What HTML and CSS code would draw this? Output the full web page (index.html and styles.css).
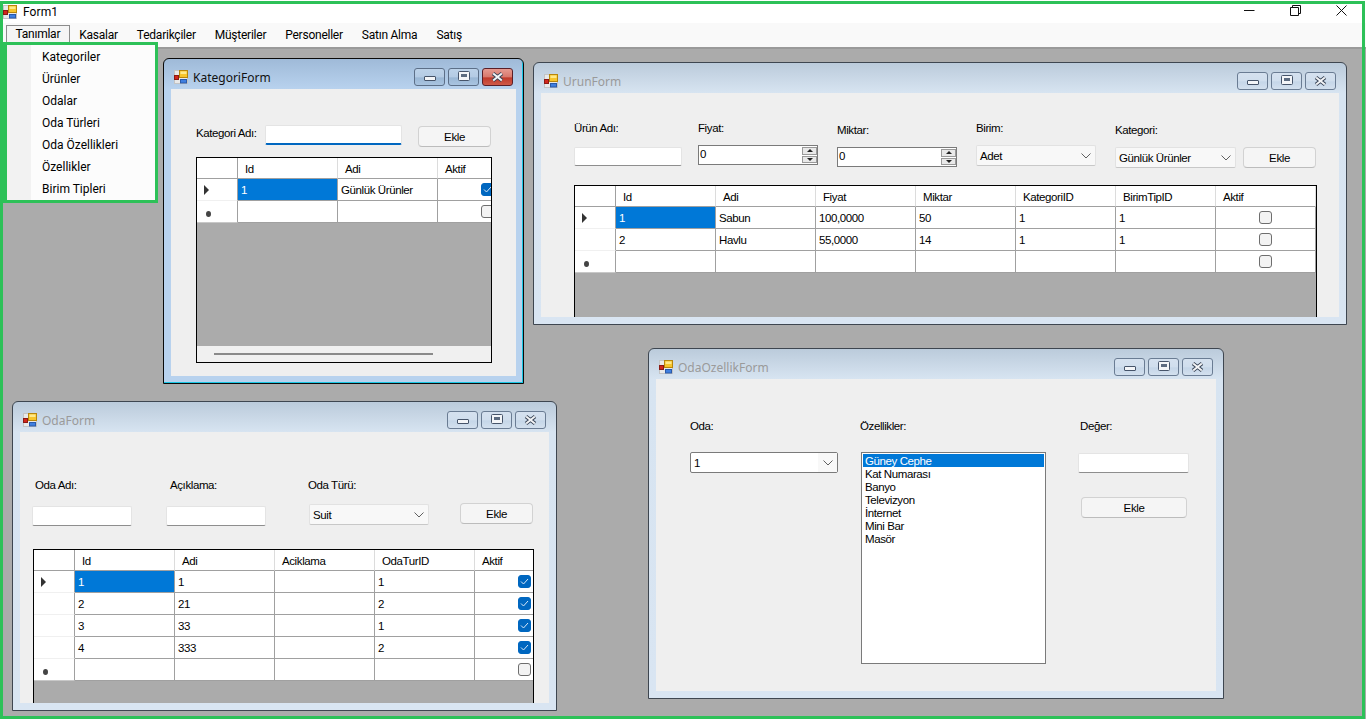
FILE: index.html
```html
<!DOCTYPE html>
<html lang="tr">
<head>
<meta charset="utf-8">
<title>Form1</title>
<link rel="stylesheet" href="styles.css">
</head>
<body>
<svg class="defs" width="0" height="0" aria-hidden="true">
  <symbol id="app" viewBox="0 0 14 14">
    <rect x="0.5" y="0.5" width="13" height="13" fill="#e9e9e9" stroke="#c4c4c4"/>
    <rect x="5.5" y="0.5" width="8" height="7" fill="#f7c52c" stroke="#b8860b" stroke-width="1"/>
    <rect x="6.5" y="1.5" width="6" height="2.5" fill="#ffe98a"/>
    <rect x="0.5" y="5.5" width="4" height="4" fill="#d2261c" stroke="#8a1a14" stroke-width="1"/>
    <rect x="6.5" y="9.5" width="6" height="3.5" fill="#3f7fe0" stroke="#2a5aa8" stroke-width="1"/>
  </symbol>
  <symbol id="min" viewBox="0 0 12 6"><rect x="0.5" y="0.5" width="11" height="4" rx="0.5" fill="#f3f5f8" stroke="#46546a"/></symbol>
  <symbol id="max" viewBox="0 0 12 10"><rect x="0.5" y="0.5" width="11" height="9" rx="1" fill="#f3f5f8" stroke="#46546a"/><rect x="3" y="3" width="6" height="3" fill="#5c6b80"/></symbol>
  <symbol id="close" viewBox="0 0 13 10"><path d="M2 1.5 L6.5 5 L11 1.5 M2 8.5 L6.5 5 L11 8.5" fill="none" stroke="#3a4658" stroke-width="3.8"/><path d="M2.2 1.6 L6.5 5 L10.8 1.6 M2.2 8.4 L6.5 5 L10.8 8.4" fill="none" stroke="#f5f6f8" stroke-width="1.9"/></symbol>
  <symbol id="chev" viewBox="0 0 10 6"><path d="M0.5 0.5 L5 5 L9.5 0.5" fill="none" stroke="#606060" stroke-width="1"/></symbol>
  <symbol id="tick" viewBox="0 0 9 7"><path d="M1 3.5 L3.5 6 L8 1" fill="none" stroke="#d8e8f8" stroke-width="1"/></symbol>
</svg>

<div class="app">
  <header class="titlebar">
    <svg class="app-icon"><use href="#app"/></svg>
    <span class="app-title">Form1</span>
    <div class="sys-buttons">
      <span class="sys"><svg width="11" height="11" viewBox="0 0 11 11"><path d="M0 5.5 H10.5" stroke="#111" stroke-width="1"/></svg></span>
      <span class="sys"><svg width="11" height="11" viewBox="0 0 11 11"><path d="M0.5 2.5 H8.5 V10.5 H0.5 Z M2.5 2.5 V0.5 H10.5 V8.5 H8.5" fill="none" stroke="#111" stroke-width="1"/></svg></span>
      <span class="sys"><svg width="11" height="11" viewBox="0 0 11 11"><path d="M0.5 0.5 L10.5 10.5 M10.5 0.5 L0.5 10.5" stroke="#111" stroke-width="1"/></svg></span>
    </div>
  </header>

  <nav class="menubar">
    <span class="menu-item open">Tanımlar</span>
    <span class="menu-item">Kasalar</span>
    <span class="menu-item">Tedarikçiler</span>
    <span class="menu-item">Müşteriler</span>
    <span class="menu-item">Personeller</span>
    <span class="menu-item">Satın Alma</span>
    <span class="menu-item">Satış</span>
  </nav>

  <main class="mdi"></main>

  <!-- KategoriForm -->
  <section class="win active win-kategori">
    <div class="win-title">
      <svg class="win-icon"><use href="#app"/></svg>
      <span class="win-name">KategoriForm</span>
      <div class="win-buttons">
        <span class="wb"><svg class="g-min"><use href="#min"/></svg></span>
        <span class="wb"><svg class="g-max"><use href="#max"/></svg></span>
        <span class="wb wb-close"><svg class="g-close"><use href="#close"/></svg></span>
      </div>
    </div>
    <div class="client kategori-client">
      <div class="kategori-row">
        <label class="lbl kategori-label">Kategori Adı:</label>
        <span class="textbox focus kategori-text"></span>
        <span class="btn kategori-btn">Ekle</span>
      </div>
      <div class="dgv dgv-kategori">
        <div class="cells cols-3">
          <span class="h rh-h"></span><span class="h">Id</span><span class="h">Adi</span><span class="h">Aktif</span>
          <span class="rh"><i class="arrow"></i></span><span class="c sel">1</span><span class="c">Günlük Ürünler</span><span class="c ck"><span class="check on"><svg><use href="#tick"/></svg></span></span>
          <span class="rh new"><i class="star"></i></span><span class="c"></span><span class="c"></span><span class="c ck"><span class="check"></span></span>
        </div>
        <div class="hscroll"><span class="hthumb"></span></div>
      </div>
    </div>
  </section>

  <!-- UrunForm -->
  <section class="win win-urun">
    <div class="win-title">
      <svg class="win-icon"><use href="#app"/></svg>
      <span class="win-name">UrunForm</span>
      <div class="win-buttons">
        <span class="wb"><svg class="g-min"><use href="#min"/></svg></span>
        <span class="wb"><svg class="g-max"><use href="#max"/></svg></span>
        <span class="wb"><svg class="g-close"><use href="#close"/></svg></span>
      </div>
    </div>
    <div class="client urun-client">
      <div class="urun-row">
        <div class="field gap-12"><label class="lbl">Ürün Adı:</label><span class="textbox w-108"></span></div>
        <div class="field"><label class="lbl">Fiyat:</label><span class="numeric"><span class="num-val">0</span><span class="spin"><i class="up"></i><i class="down"></i></span></span></div>
        <div class="field low"><label class="lbl">Miktar:</label><span class="numeric"><span class="num-val">0</span><span class="spin"><i class="up"></i><i class="down"></i></span></span></div>
        <div class="field"><label class="lbl">Birim:</label><span class="combo">Adet<svg class="chev"><use href="#chev"/></svg></span></div>
        <div class="field low"><label class="lbl">Kategori:</label><span class="combo combo-wide">Günlük Ürünler<svg class="chev"><use href="#chev"/></svg></span></div>
        <span class="btn urun-btn">Ekle</span>
      </div>
      <div class="dgv dgv-urun">
        <div class="cells cols-7">
          <span class="h rh-h"></span><span class="h">Id</span><span class="h">Adi</span><span class="h">Fiyat</span><span class="h">Miktar</span><span class="h">KategoriID</span><span class="h">BirimTipID</span><span class="h">Aktif</span>
          <span class="rh"><i class="arrow"></i></span><span class="c sel">1</span><span class="c">Sabun</span><span class="c">100,0000</span><span class="c">50</span><span class="c">1</span><span class="c">1</span><span class="c ck"><span class="check"></span></span>
          <span class="rh"></span><span class="c">2</span><span class="c">Havlu</span><span class="c">55,0000</span><span class="c">14</span><span class="c">1</span><span class="c">1</span><span class="c ck"><span class="check"></span></span>
          <span class="rh new"><i class="star"></i></span><span class="c"></span><span class="c"></span><span class="c"></span><span class="c"></span><span class="c"></span><span class="c"></span><span class="c ck"><span class="check"></span></span>
        </div>
      </div>
    </div>
  </section>

  <!-- OdaForm -->
  <section class="win win-oda">
    <div class="win-title">
      <svg class="win-icon"><use href="#app"/></svg>
      <span class="win-name">OdaForm</span>
      <div class="win-buttons">
        <span class="wb"><svg class="g-min"><use href="#min"/></svg></span>
        <span class="wb"><svg class="g-max"><use href="#max"/></svg></span>
        <span class="wb"><svg class="g-close"><use href="#close"/></svg></span>
      </div>
    </div>
    <div class="client oda-client">
      <div class="oda-row">
        <div class="field gap-14"><label class="lbl in-3">Oda Adı:</label><span class="textbox w-100"></span></div>
        <div class="field gap-14"><label class="lbl in-4">Açıklama:</label><span class="textbox w-100"></span></div>
        <div class="field gap-12"><label class="lbl out-1">Oda Türü:</label><span class="combo">Suit<svg class="chev"><use href="#chev"/></svg></span></div>
        <span class="btn oda-btn">Ekle</span>
      </div>
      <div class="dgv dgv-oda">
        <div class="cells cols-5">
          <span class="h rh-h"></span><span class="h">Id</span><span class="h">Adi</span><span class="h">Aciklama</span><span class="h">OdaTurID</span><span class="h">Aktif</span>
          <span class="rh"><i class="arrow"></i></span><span class="c sel">1</span><span class="c">1</span><span class="c"></span><span class="c">1</span><span class="c ck"><span class="check on"><svg><use href="#tick"/></svg></span></span>
          <span class="rh"></span><span class="c">2</span><span class="c">21</span><span class="c"></span><span class="c">2</span><span class="c ck"><span class="check on"><svg><use href="#tick"/></svg></span></span>
          <span class="rh"></span><span class="c">3</span><span class="c">33</span><span class="c"></span><span class="c">1</span><span class="c ck"><span class="check on"><svg><use href="#tick"/></svg></span></span>
          <span class="rh"></span><span class="c">4</span><span class="c">333</span><span class="c"></span><span class="c">2</span><span class="c ck"><span class="check on"><svg><use href="#tick"/></svg></span></span>
          <span class="rh new"><i class="star"></i></span><span class="c"></span><span class="c"></span><span class="c"></span><span class="c"></span><span class="c ck"><span class="check"></span></span>
        </div>
      </div>
    </div>
  </section>

  <!-- OdaOzellikForm -->
  <section class="win win-ozellik">
    <div class="win-title">
      <svg class="win-icon"><use href="#app"/></svg>
      <span class="win-name">OdaOzellikForm</span>
      <div class="win-buttons">
        <span class="wb"><svg class="g-min"><use href="#min"/></svg></span>
        <span class="wb"><svg class="g-max"><use href="#max"/></svg></span>
        <span class="wb"><svg class="g-close"><use href="#close"/></svg></span>
      </div>
    </div>
    <div class="client ozellik-client">
      <div class="ozellik-row">
        <div class="field gap-19"><label class="lbl">Oda:</label><span class="combo combo-edit">1<span class="combo-side"><svg class="chev"><use href="#chev"/></svg></span></span></div>
        <div class="field gap-19"><label class="lbl out-1">Özellikler:</label>
          <ul class="listbox">
            <li class="selected">Güney Cephe</li>
            <li>Kat Numarası</li>
            <li>Banyo</li>
            <li>Televizyon</li>
            <li>İnternet</li>
            <li>Mini Bar</li>
            <li>Masör</li>
          </ul>
        </div>
        <div class="field gap-20"><label class="lbl in-2">Değer:</label><span class="textbox w-111"></span><span class="btn ozellik-btn">Ekle</span></div>
      </div>
    </div>
  </section>

  <!-- Open dropdown of Tanımlar -->
  <ul class="dropdown">
    <li>Kategoriler</li>
    <li>Ürünler</li>
    <li>Odalar</li>
    <li>Oda Türleri</li>
    <li>Oda Özellikleri</li>
    <li>Özellikler</li>
    <li>Birim Tipleri</li>
  </ul>

  <div class="green-frame"></div>
</div>
</body>
</html>
```
FILE: styles.css
```css
* { box-sizing: border-box; }
html, body { margin: 0; padding: 0; }
body { background: #ababab; overflow: hidden; }
.defs { position: absolute; }

.app {
  position: relative;
  width: 1366px;
  height: 719px;
  display: flex;
  flex-direction: column;
  overflow: hidden;
  font-family: Roboto, "Noto Sans", sans-serif;
  font-size: 12px;
  color: #000;
}

/* Top-level window chrome */
.titlebar {
  height: 23px;
  flex: none;
  background: #fff;
  display: flex;
  align-items: center;
  padding-left: 3px;
}
.app-icon { width: 14px; height: 14px; margin-top: 1px; }
.app-title { margin-left: 6px; font-size: 12px; letter-spacing: 0.1px; }
.sys-buttons { margin-left: auto; margin-right: 2px; display: flex; align-self: flex-start; }
.sys { width: 46px; height: 20px; display: flex; align-items: center; justify-content: center; padding-top: 1px; }
.sys svg { display: block; }

.menubar {
  height: 26px;
  flex: none;
  background: #f9f9f9;
  border-bottom: 2px solid #9a9a9a;
  display: flex;
  padding: 2px 0 0 6px;
}
.menu-item { padding: 0 9.5px; line-height: 18px; height: 18px; margin-top: 1px; white-space: nowrap; letter-spacing: -0.24px; }
.menu-item.open { border: 1px solid #8c8c8c; border-bottom: 0; padding: 0 8.5px; line-height: 17px; background: #f5f5f5; margin-top: 0; height: 20px; }

.mdi { flex: 1; background: #ababab; }

/* Dropdown */
.dropdown {
  position: absolute;
  left: 3px;
  top: 42px;
  width: 155px;
  height: 161px;
  margin: 0;
  padding: 1px 0 0;
  list-style: none;
  border: 3px solid #2dc158;
  border-left-width: 4px;
  background: linear-gradient(to right, #f2f2f2 24px, #fcfcfc 24px);
}
.dropdown li { height: 22px; line-height: 22px; padding-left: 35px; white-space: nowrap; }

.green-frame {
  position: absolute;
  left: 0;
  top: 1px;
  width: 1365px;
  height: 718px;
  border: 3px solid #2dc158;
  pointer-events: none;
}

/* MDI children */
.win {
  position: absolute;
  display: flex;
  flex-direction: column;
  border: 1px solid #3e4650;
  border-radius: 6px 6px 0 0;
  background: linear-gradient(to bottom, #bbcbdb 0, #d7e4f1 30px, #d9e5f2 100%);
}
.win.active {
  border-color: #0a0a0a;
  background: linear-gradient(to bottom, #9fbad8 0, #b8d2ee 30px, #b8d2ee 100%);
  box-shadow: inset -1px -1px 0 #19c6e4;
}
.win-kategori { left: 163px; top: 58px; width: 361px; height: 326px; }
.win-urun { left: 533px; top: 62px; width: 814px; height: 263px; }
.win-oda { left: 12px; top: 401px; width: 545px; height: 310px; }
.win-ozellik { left: 648px; top: 348px; width: 576px; height: 351px; }

.win-title { height: 30px; flex: none; display: flex; align-items: flex-start; padding: 0 10px 0 10px; }
.win-icon { width: 14px; height: 14px; margin-top: 11px; flex: none; }
.win-name { margin: 10px 0 0 5px; line-height: 17px; color: #9a9a9a; font-family: "Noto Sans", sans-serif; }
.active .win-name { color: #111; }
.win-buttons { margin: 9px 0 0 auto; display: flex; gap: 3px; }
.wb {
  width: 31px;
  height: 18px;
  border: 1px solid #6a7c93;
  border-radius: 3px;
  background: linear-gradient(to bottom, #d5e1ef 0, #d0deed 50%, #c5d6e8 55%, #d3e0ee 100%);
  display: flex;
  align-items: center;
  justify-content: center;
}
.active .wb { border-color: #5c6f88; background: linear-gradient(to bottom, #bcd2e9 0, #b4cbe4 50%, #9ab7d5 55%, #a9c4e0 100%); }
.active .wb-close { border-color: #5a1f28; background: linear-gradient(to bottom, #e69a90 0, #d8786c 50%, #c0392b 55%, #cf5a48 100%); }
.g-min { width: 12px; height: 6px; margin-top: 4px; }
.g-max { width: 12px; height: 10px; margin-top: -2px; }
.g-close { width: 13px; height: 10px; margin-top: -1px; }

.client { flex: 1; margin: 0 7px 7px; background: #efefef; overflow: hidden; min-height: 0; }

/* Controls */
.lbl, .btn, .numeric, .combo, .listbox, .dgv {
  font-family: "Liberation Sans", Arial, sans-serif;
  font-size: 11.5px;
  letter-spacing: -0.4px;
}
.lbl { display: block; line-height: 14px; white-space: nowrap; }
.field { display: flex; flex-direction: column; align-items: flex-start; gap: 10px; }
.gap-12 { gap: 12px; }
.gap-14 { gap: 14px; }
.gap-19 { gap: 19px; }
.gap-20 { gap: 20px; }
.low { margin-top: 2px; }
.in-2 { margin-left: 2px; }
.in-3 { margin-left: 3px; }
.in-4 { margin-left: 4px; }
.out-1 { margin-left: -1px; }

.textbox {
  display: block;
  height: 20px;
  background: #fff;
  border: 1px solid #e4e4e4;
  border-bottom-color: #8e8e8e;
  border-radius: 2px;
}
.textbox.focus { border-bottom: 2px solid #0067c0; }
.w-100 { width: 100px; }
.w-108 { width: 108px; height: 19px; }
.w-111 { width: 111px; }

.btn {
  display: flex;
  align-items: center;
  justify-content: center;
  height: 21px;
  background: #f5f5f5;
  border: 1px solid #d2d2d2;
  border-bottom-color: #bcbcbc;
  border-radius: 4px;
}

.numeric {
  display: flex;
  width: 120px;
  height: 20px;
  background: #fff;
  border: 1px solid #7a7a7a;
}
.num-val { flex: 1; padding: 1px 0 0 1px; line-height: 14px; }
.spin { width: 15px; margin: 1px 0; display: flex; flex-direction: column; gap: 1px; }
.spin i { flex: 1; background: #e9e9e9; border: 1px solid #9a9a9a; display: flex; align-items: center; justify-content: center; }
.spin i::before { content: ""; width: 0; height: 0; border-left: 3px solid transparent; border-right: 3px solid transparent; }
.spin .up::before { border-bottom: 3px solid #222; }
.spin .down::before { border-top: 3px solid #222; }

.combo {
  display: flex;
  align-items: center;
  width: 120px;
  height: 21px;
  padding-left: 3px;
  background: #f8f8f8;
  border: 1px solid #e2e2e2;
  border-bottom-color: #c8c8c8;
  border-radius: 2px;
}
.combo-wide { width: 121px; }
.chev { width: 10px; height: 6px; margin-left: auto; margin-right: 4px; flex: none; }
.combo-edit { width: 148px; background: #fff; border-color: #7a7a7a; padding: 0 0 0 3px; border-radius: 2px; }
.combo-side { margin-left: auto; width: 19px; align-self: stretch; background: #f8f8f8; display: flex; align-items: center; }

.listbox {
  margin: 0;
  padding: 1px;
  list-style: none;
  width: 185px;
  height: 212px;
  background: #fff;
  border: 1px solid #7a7a7a;
}
.listbox li { height: 13px; line-height: 15px; padding-left: 2px; white-space: nowrap; }
.listbox .selected { background: #0078d7; color: #fff; }

/* DataGridView */
.dgv {
  background: #ababab;
  border: 1px solid #000;
  display: flex;
  flex-direction: column;
  overflow: hidden;
}
.cells { display: grid; grid-auto-rows: 22px; grid-template-rows: 21px; flex: none; }
.cols-3 { grid-template-columns: 41px repeat(3, 100px); }
.cols-5 { grid-template-columns: 41px repeat(5, 100px); }
.cols-7 { grid-template-columns: 41px repeat(7, 100px); }
.h, .c, .rh { display: flex; align-items: center; background: #fff; white-space: nowrap; }
.h { padding: 2px 0 0 7px; border-right: 1px solid #dcdcdc; border-bottom: 1px solid #a0a0a0; }
.rh-h { border-right-color: #a0a0a0; }
.c { padding-left: 3px; border-right: 1px solid #a0a0a0; border-bottom: 1px solid #a0a0a0; }
.c.sel { background: #0078d7; color: #fff; }
.c.ck { padding: 0; justify-content: center; }
.rh { border-right: 1px solid #a0a0a0; border-bottom: 1px solid #f0f0f0; padding-left: 7px; }
.rh.new { border-bottom-color: #c8c8c8; padding-left: 9px; }
.arrow { width: 0; height: 0; border-left: 5px solid #333; border-top: 5px solid transparent; border-bottom: 5px solid transparent; }
.star { width: 5px; height: 6px; border-radius: 50%; background: #444; margin-top: 4px; }

.check {
  display: flex;
  align-items: center;
  justify-content: center;
  width: 13px;
  height: 13px;
  border-radius: 3px;
  background: #f3f3f3;
  border: 1px solid #6e6e6e;
}
.check.on { background: #0067c0; border-color: #0067c0; }
.check svg { width: 9px; height: 7px; display: block; }

.hscroll { margin-top: auto; height: 16px; flex: none; background: #f0f0f0; display: flex; align-items: center; padding-left: 17px; }
.hthumb { display: block; width: 219px; height: 2px; background: #8a8a8a; }

/* KategoriForm layout */
.kategori-client { padding: 36px 0 0 25px; }
.kategori-row { display: flex; align-items: flex-start; }
.kategori-label { width: 69px; margin-top: 1px; }
.kategori-text { width: 137px; }
.kategori-btn { width: 73px; margin: 1px 0 0 16px; }
.dgv-kategori { margin-top: 10px; width: 296px; height: 206px; }

/* UrunForm layout */
.urun-client { padding: 28px 0 0 33px; }
.urun-row { display: grid; grid-template-columns: 124px 139px 139px 139px 128px 73px; align-items: start; height: 47px; }
.urun-btn { margin-top: 26px; }
.dgv-urun { margin-top: 17px; width: 743px; height: 200px; }

/* OdaForm layout */
.oda-client { padding: 46px 0 0 12px; }
.oda-row { display: grid; grid-template-columns: 134px 143px 151px 73px; align-items: start; height: 48px; }
.oda-btn { margin-top: 25px; }
.dgv-oda { margin: 23px 0 0 1px; width: 501px; height: 200px; }

/* OdaOzellikForm layout */
.ozellik-client { padding: 40px 0 0 34px; }
.ozellik-row { display: grid; grid-template-columns: 171px 217px 111px; align-items: start; }
.ozellik-btn { width: 106px; margin-left: 3px; margin-top: 4px; }
```
